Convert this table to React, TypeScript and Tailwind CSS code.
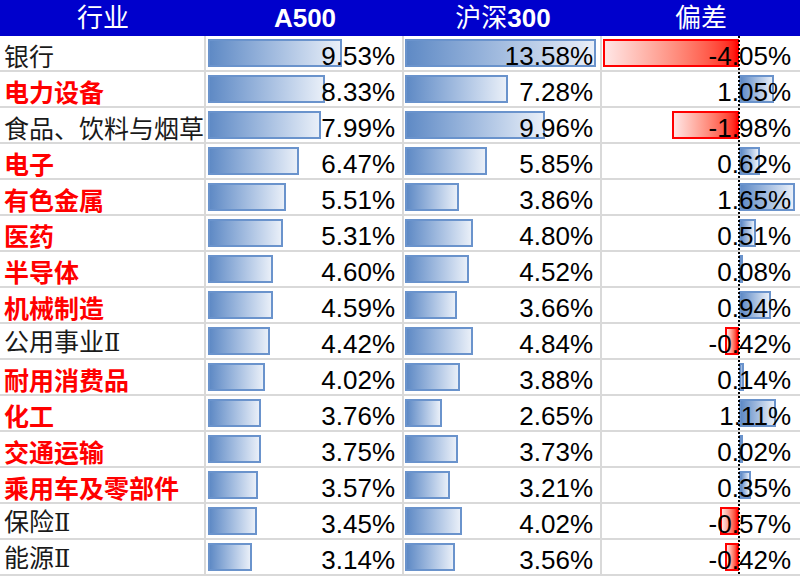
import React from "react";

type Row = { name: string; red: boolean; a: number; h: number; d: number };

const rows: Row[] = [
  { name: "银行", red: false, a: 9.53, h: 13.58, d: -4.05 },
  { name: "电力设备", red: true, a: 8.33, h: 7.28, d: 1.05 },
  { name: "食品、饮料与烟草", red: false, a: 7.99, h: 9.96, d: -1.98 },
  { name: "电子", red: true, a: 6.47, h: 5.85, d: 0.62 },
  { name: "有色金属", red: true, a: 5.51, h: 3.86, d: 1.65 },
  { name: "医药", red: true, a: 5.31, h: 4.8, d: 0.51 },
  { name: "半导体", red: true, a: 4.6, h: 4.52, d: 0.08 },
  { name: "机械制造", red: true, a: 4.59, h: 3.66, d: 0.94 },
  { name: "公用事业Ⅱ", red: false, a: 4.42, h: 4.84, d: -0.42 },
  { name: "耐用消费品", red: true, a: 4.02, h: 3.88, d: 0.14 },
  { name: "化工", red: true, a: 3.76, h: 2.65, d: 1.11 },
  { name: "交通运输", red: true, a: 3.75, h: 3.73, d: 0.02 },
  { name: "乘用车及零部件", red: true, a: 3.57, h: 3.21, d: 0.35 },
  { name: "保险Ⅱ", red: false, a: 3.45, h: 4.02, d: -0.57 },
  { name: "能源Ⅱ", red: false, a: 3.14, h: 3.56, d: -0.42 },
];

const SCALE = 14.1;
const DSCALE = 33.7;
const AXIS = 137;

const blueBar =
  "absolute top-[3px] h-[28px] border-2 border-[#6a93cc] bg-gradient-to-r from-[#5f8ac5] to-[#e9eff8]";
const redBar =
  "absolute top-[3px] h-[28px] border-2 border-[#ff0000] bg-gradient-to-r from-[#ffe6e6] to-[#ff0000]";
const numText =
  "relative text-[26px] leading-none text-black font-['Liberation_Sans',Arial,sans-serif]";

function NumCell({ v, inset }: { v: number; inset: number }) {
  return (
    <div className="relative h-[34px] bg-white flex items-end justify-end pr-[7px] pb-[1px]">
      <div className={blueBar} style={{ left: inset, width: v * SCALE }} />
      <span className={numText}>{v.toFixed(2)}%</span>
    </div>
  );
}

function DevCell({ v }: { v: number }) {
  const w = Math.max(Math.abs(v) * DSCALE, 2);
  return (
    <div className="relative h-[34px] bg-white flex items-end justify-end pr-[9px] pb-[1px]">
      {v < 0 ? (
        <div className={redBar} style={{ left: AXIS - w, width: w }} />
      ) : (
        <div className={blueBar} style={{ left: AXIS, width: w }} />
      )}
      <span className={numText}>{v.toFixed(2)}%</span>
    </div>
  );
}

function Label({ name }: { name: string }) {
  if (name.endsWith("Ⅱ")) {
    return (
      <>
        {name.slice(0, -1)}
        <span className="font-['DejaVu_Serif','Liberation_Serif',serif] text-[24px]">Ⅱ</span>
      </>
    );
  }
  return <>{name}</>;
}

export default function App() {
  return (
    <div className="w-[800px] h-[580px] bg-white overflow-hidden">
      <div className="grid grid-cols-[206px_198px_198px_198px] h-[36px] bg-[#0000cc] text-white text-[26px] leading-[32px]">
        <div className="flex items-start justify-center font-['Noto_Sans_CJK_SC',sans-serif]">
          行业
        </div>
        <div className="flex items-start justify-center pt-[2px] font-bold font-['Liberation_Sans',Arial,sans-serif]">
          A500
        </div>
        <div className="flex items-start justify-center">
          <span className="font-['Noto_Sans_CJK_SC',sans-serif]">沪深</span>
          <span className="pt-[2px] font-bold font-['Liberation_Sans',Arial,sans-serif]">300</span>
        </div>
        <div className="flex items-start justify-center font-['Noto_Sans_CJK_SC',sans-serif]">
          偏差
        </div>
      </div>
      <div className="relative">
        <div className="grid grid-cols-[204px_196px_196px_198px] gap-[2px] bg-[#d9d9d9] pb-[2px]">
          {rows.map((r) => (
            <React.Fragment key={r.name}>
              <div className="h-[34px] bg-white flex items-end pl-[4px] pb-[1px]">
                <span
                  className={`text-[25px] leading-[28px] whitespace-nowrap font-['Noto_Sans_CJK_SC',sans-serif] ${
                    r.red ? "text-[#ff0000] font-bold" : "text-[#1a1a1a] font-normal"
                  }`}
                >
                  <Label name={r.name} />
                </span>
              </div>
              <NumCell v={r.a} inset={2} />
              <NumCell v={r.h} inset={1} />
              <DevCell v={r.d} />
            </React.Fragment>
          ))}
        </div>
        <div className="absolute left-[738px] top-0 bottom-0 w-[2px] bg-[repeating-linear-gradient(to_bottom,#000_0px,#000_2px,transparent_2px,transparent_4px)]" />
      </div>
    </div>
  );
}
